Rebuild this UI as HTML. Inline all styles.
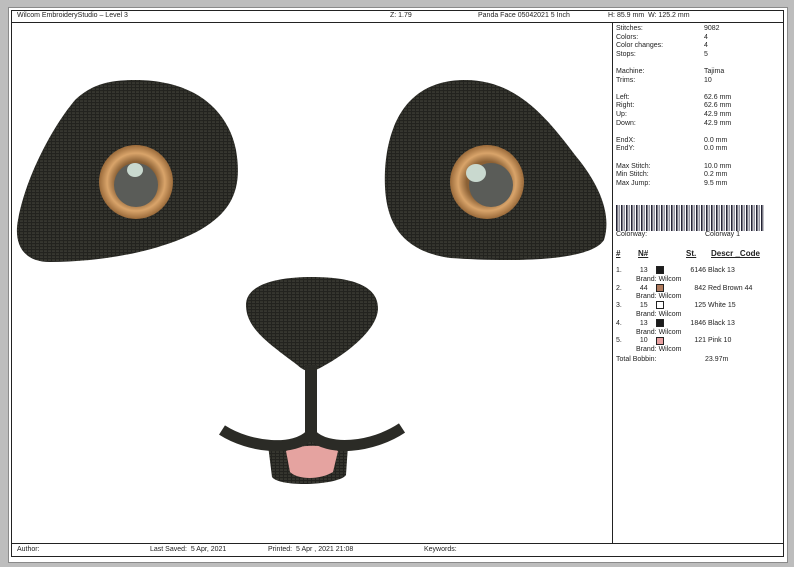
<!DOCTYPE html>
<html><head><meta charset="utf-8"><style>
html,body{margin:0;padding:0}
body{width:794px;height:567px;background:#bdbdbd;position:relative;overflow:hidden;font-family:"Liberation Sans",sans-serif;font-size:7px;color:#222}
.page{position:absolute;left:8px;top:7px;width:778px;height:554px;background:#fff;border:1px solid #8a8a8a}
.frame{position:absolute;left:11px;top:10px;width:773px;height:547px;border:1px solid #222;box-sizing:border-box}
.t{position:absolute;white-space:nowrap;line-height:8px}
.hl{position:absolute;background:#222}
.sw{position:absolute;width:6px;height:6px;border:1px solid #222}
.n{position:absolute;white-space:nowrap;line-height:8px;width:22px;text-align:right;left:684px}
.d{position:absolute;white-space:nowrap;line-height:8px;left:708px}
</style></head><body>
<div class="page"></div>
<div class="frame"></div>
<div class="hl" style="left:11px;top:22px;width:773px;height:1px"></div>
<div class="hl" style="left:11px;top:543px;width:773px;height:1px"></div>
<div class="hl" style="left:612px;top:22px;width:1px;height:521px"></div>

<div class="t" style="left:17px;top:12px">Wilcom EmbroideryStudio – Level 3</div>
<div class="t" style="left:390px;top:12px">Z: 1.79</div>
<div class="t" style="left:478px;top:12px">Panda Face 05042021 5 Inch</div>
<div class="t" style="left:608px;top:12px">H: 85.9 mm&nbsp; W: 125.2 mm</div>

<div class="t" style="left:17px;top:546px">Author:</div>
<div class="t" style="left:150px;top:546px">Last Saved:&nbsp; 5 Apr, 2021</div>
<div class="t" style="left:268px;top:546px">Printed:&nbsp; 5 Apr , 2021 21:08</div>
<div class="t" style="left:424px;top:546px">Keywords:</div>

<div class="t" style="left:616px;top:25px;line-height:8.6px">Stitches:<br>Colors:<br>Color changes:<br>Stops:<br><br>Machine:<br>Trims:<br><br>Left:<br>Right:<br>Up:<br>Down:<br><br>EndX:<br>EndY:<br><br>Max Stitch:<br>Min Stitch:<br>Max Jump:</div>
<div class="t" style="left:704px;top:25px;line-height:8.6px">9082<br>4<br>4<br>5<br><br>Tajima<br>10<br><br>62.6 mm<br>62.6 mm<br>42.9 mm<br>42.9 mm<br><br>0.0 mm<br>0.0 mm<br><br>10.0 mm<br>0.2 mm<br>9.5 mm</div>

<svg style="position:absolute;left:616px;top:205px" width="150" height="26">
<defs><pattern id="bc" width="5" height="26" patternUnits="userSpaceOnUse"><rect x="0" width="1.6" height="26" fill="#223"/><rect x="2.6" width="1.1" height="26" fill="#667"/></pattern></defs>
<rect x="0" y="0" width="148" height="26" fill="url(#bc)"/>
</svg>
<div class="t" style="left:616px;top:231px">Colorway:</div>
<div class="t" style="left:705px;top:231px">Colorway 1</div>

<div class="t" style="left:616px;top:250px;font-size:8px;font-weight:bold;text-decoration:underline">#</div>
<div class="t" style="left:638px;top:250px;font-size:8px;font-weight:bold;text-decoration:underline">N#</div>
<div class="t" style="left:686px;top:250px;font-size:8px;font-weight:bold;text-decoration:underline">St.</div>
<div class="t" style="left:711px;top:250px;font-size:8px;font-weight:bold;text-decoration:underline">Descr _Code</div>

<div class="t" style="left:616px;top:267px;line-height:8.8px">1.<br><br>2.<br><br>3.<br><br>4.<br><br>5.</div>
<div class="t" style="left:636px;top:267px;line-height:8.8px">&nbsp;&nbsp;13<br>Brand: Wilcom<br>&nbsp;&nbsp;44<br>Brand: Wilcom<br>&nbsp;&nbsp;15<br>Brand: Wilcom<br>&nbsp;&nbsp;13<br>Brand: Wilcom<br>&nbsp;&nbsp;10<br>Brand: Wilcom</div>
<div class="sw" style="left:656px;top:266px;background:#1c1c1c"></div>
<div class="sw" style="left:656px;top:284px;background:#b07a5c"></div>
<div class="sw" style="left:656px;top:301px;background:#fff"></div>
<div class="sw" style="left:656px;top:319px;background:#1c1c1c"></div>
<div class="sw" style="left:656px;top:337px;background:#e8a0a0"></div>
<div class="n" style="top:267px">6146</div><div class="d" style="top:267px">Black 13</div>
<div class="n" style="top:284.6px">842</div><div class="d" style="top:284.6px">Red Brown 44</div>
<div class="n" style="top:302.2px">125</div><div class="d" style="top:302.2px">White 15</div>
<div class="n" style="top:319.8px">1846</div><div class="d" style="top:319.8px">Black 13</div>
<div class="n" style="top:337.4px">121</div><div class="d" style="top:337.4px">Pink 10</div>
<div class="t" style="left:616px;top:356px">Total Bobbin:</div>
<div class="t" style="left:705px;top:356px">23.97m</div>

<svg style="position:absolute;left:0;top:0" width="612" height="543">
<defs>
<pattern id="st" width="4" height="3" patternUnits="userSpaceOnUse"><rect width="4" height="3" fill="#23231f"/><rect y="1.6" width="3" height="0.9" fill="#4a4a40"/></pattern>
<radialGradient id="ring"><stop offset="0.55" stop-color="#8a6035"/><stop offset="0.78" stop-color="#d9a46a"/><stop offset="1" stop-color="#9a6a3a"/></radialGradient>
</defs>
<path d="M135 80 C195 80 228 110 236 150 C242 185 235 210 200 230 C160 252 100 262 50 262 C20 262 14 240 18 220 C25 180 50 130 75 100 C92 84 110 80 135 80Z" fill="url(#st)"/>
<circle cx="136" cy="182" r="37" fill="url(#ring)"/>
<circle cx="136" cy="185" r="22" fill="#5a5c58"/>
<ellipse cx="135" cy="170" rx="8" ry="7" fill="#c9d9cf"/>
<path d="M465 80 C410 80 388 120 385 170 C383 215 395 250 450 258 C510 262 590 262 604 240 C612 215 600 185 575 155 C545 115 515 80 465 80Z" fill="url(#st)"/>
<circle cx="487" cy="182" r="37" fill="url(#ring)"/>
<circle cx="491" cy="185" r="22" fill="#5a5c58"/>
<ellipse cx="476" cy="173" rx="10" ry="9" fill="#c9d9cf"/>
<path d="M312 277 C350 277 378 285 378 308 C378 330 345 355 320 368 C310 373 305 372 296 364 C268 343 246 328 246 305 C246 285 275 277 312 277Z" fill="url(#st)"/>
<path d="M268 445 C285 438 335 438 348 445 L346 475 C340 485 280 488 272 477Z" fill="url(#st)"/>
<path d="M286 451 C300 444 325 444 338 451 L333 472 C320 480 298 480 290 472Z" fill="#e5a3a0"/>
<rect x="305" y="365" width="12" height="67" fill="#2b2b26"/>
<path d="M222 430 C250 448 295 452 311 434 C327 452 372 448 402 428" fill="none" stroke="#2b2b26" stroke-width="11"/>
</svg>
</body></html>
